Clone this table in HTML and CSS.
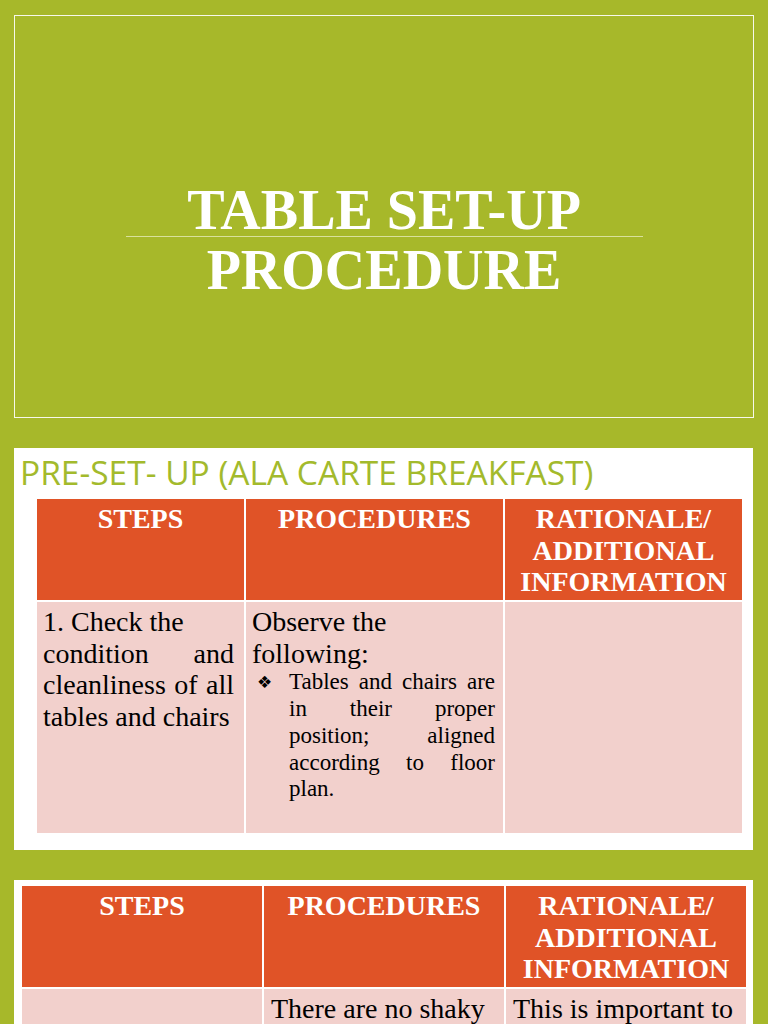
FILE: index.html
```html
<!DOCTYPE html>
<html lang="en">
<head>
<meta charset="utf-8">
<title>Table Set-Up Procedure</title>
<link rel="stylesheet" href="styles.css">
</head>
<body>
<div class="page">
  <section class="cover">
    <h1 class="cover-title">
      <span class="t1">TABLE SET-UP</span>
      <span class="rule"></span>
      <span class="t2">PROCEDURE</span>
    </h1>
  </section>

  <section class="slide slide-a">
    <h2 class="slide-title">PRE-SET- UP (ALA CARTE BREAKFAST)</h2>
    <div class="grid grid-a">
      <div class="th">STEPS</div>
      <div class="th">PROCEDURES</div>
      <div class="th">RATIONALE/<br>ADDITIONAL<br>INFORMATION</div>
      <div class="td body-a step-cell">
        <p class="just">1. Check the<br>condition and cleanliness of all tables and chairs</p>
      </div>
      <div class="td body-a">
        <p>Observe the following:</p>
        <ul class="bullets">
          <li><span class="mark">&#10070;</span><span class="li-text">Tables and chairs are in their proper position; aligned according to floor plan.</span></li>
        </ul>
      </div>
      <div class="td body-a"></div>
    </div>
  </section>

  <section class="slide slide-b">
    <div class="grid grid-b">
      <div class="th">STEPS</div>
      <div class="th">PROCEDURES</div>
      <div class="th">RATIONALE/<br>ADDITIONAL<br>INFORMATION</div>
      <div class="td body-b"></div>
      <div class="td body-b"><p>There are no shaky</p></div>
      <div class="td body-b"><p>This is important to</p></div>
    </div>
  </section>
</div>
</body>
</html>
```

FILE: styles.css
```css
html, body {
  margin: 0;
  padding: 0;
}
body {
  background: #a7b82a;
  font-family: "Liberation Serif", "Times New Roman", serif;
  overflow: hidden;
}
.page {
  padding: 15px 0 0 14px;
  width: 740px;
  display: flex;
  flex-direction: column;
}
.cover {
  height: 403px;
  box-sizing: border-box;
  border: 1px solid #f7f8ea;
  display: flex;
  flex-direction: column;
  align-items: center;
  padding-top: 167px;
}
.cover-title {
  margin: 0;
  display: flex;
  flex-direction: column;
  align-items: center;
  color: #ffffff;
  font-weight: bold;
  font-size: 56px;
  font-family: "Liberation Serif", "Times New Roman", serif;
}
.t1 {
  display: block;
  line-height: 54px;
  height: 53px;
}
.rule {
  display: block;
  width: 517px;
  height: 1px;
  background: #d9e19c;
}
.t2 {
  display: block;
  line-height: 56px;
  margin-top: 5px;
}
.slide {
  background: #ffffff;
  width: 739px;
  margin-top: 30px;
}
.slide-a {
  height: 402px;
  padding-top: 4px;
  box-sizing: border-box;
}
.slide-b {
  height: 144px;
  padding: 6px 0 0 8px;
  box-sizing: border-box;
  overflow: hidden;
}
.slide-title {
  margin: 0 0 6px 6px;
  font-family: "Open Sans", "Liberation Sans", sans-serif;
  font-weight: 400;
  font-size: 33.5px;
  line-height: 41px;
  color: #a3ba2c;
  white-space: nowrap;
}
.grid {
  display: grid;
  gap: 2px;
  background: #ffffff;
}
.grid-a {
  margin-left: 23px;
  grid-template-columns: 207px 257px 237px;
  grid-template-rows: 101px 231px;
}
.grid-b {
  grid-template-columns: 240px 240px 240px;
  grid-template-rows: 101px 35px;
}
.th {
  background: #e05327;
  color: #ffffff;
  font-weight: bold;
  font-size: 28px;
  line-height: 31.5px;
  text-align: center;
  padding-top: 4px;
}
.td {
  background: #f2d0cc;
  color: #000000;
  font-size: 28px;
  line-height: 31.7px;
  padding: 4px 8px 0 6px;
}
.step-cell {
  padding-right: 10px;
}
.td p {
  margin: 0;
}
.just {
  text-align: justify;
}
.bullets {
  list-style: none;
  margin: 0;
  padding: 0;
}
.bullets li {
  display: flex;
  font-size: 23px;
  line-height: 26.7px;
}
.mark {
  font-family: "DejaVu Sans", sans-serif;
  font-size: 17px;
  width: 37px;
  padding-left: 5px;
  box-sizing: border-box;
  flex: none;
}
.li-text {
  text-align: justify;
  flex: 1;
}
.body-b {
  padding-left: 7px;
}
```
